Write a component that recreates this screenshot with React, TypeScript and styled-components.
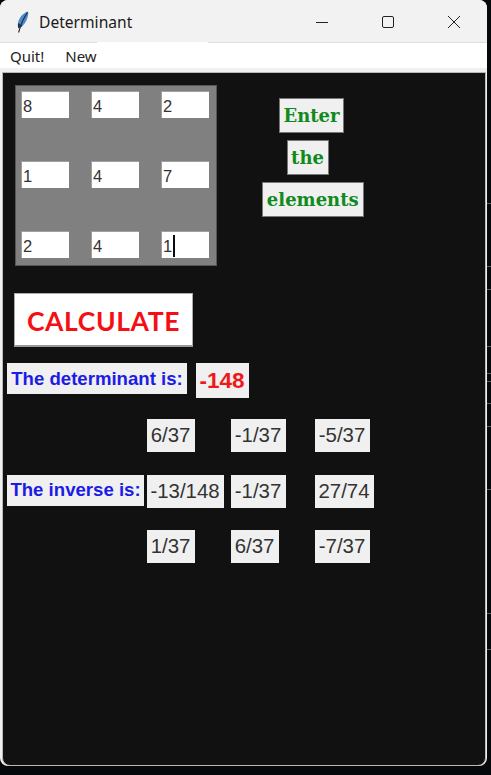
import React from "react";
import styled, { createGlobalStyle } from "styled-components";

const Global = createGlobalStyle`
  html, body { margin: 0; padding: 0; background: #05090c; }
  body { width: 491px; height: 775px; overflow: hidden; }
`;

const Screen = styled.div`
  width: 491px;
  height: 775px;
  display: flex;
  background: #05090c;
`;

const Backdrop = styled.svg`
  width: 4px;
  height: 775px;
  flex: none;
`;

const Window = styled.div`
  width: 487px;
  height: 766px;
  flex: none;
  display: flex;
  flex-direction: column;
  border-radius: 8px;
  overflow: hidden;
  background: #f0f0f0;
`;

const TitleBar = styled.div`
  height: 43px;
  box-sizing: border-box;
  flex: none;
  display: flex;
  align-items: center;
  background: linear-gradient(to right, #dedede 97px, #fff 97px, #fff 208px, #dedede 208px) bottom / 100% 1px no-repeat, #f2f2f2;
  font-family: "Noto Sans", "Open Sans", sans-serif;
  font-size: 15.6px;
  color: #1a1a1a;
`;

const AppIcon = styled.svg`
  width: 16px;
  height: 24px;
  margin-left: 15px;
  margin-right: 8px;
`;

const TitleText = styled.span`
  flex: 1;
`;

const WinButton = styled.div`
  width: 66px;
  height: 42px;
  display: flex;
  align-items: center;
  justify-content: center;
  svg { width: 14px; height: 14px; display: block; }
`;

const MenuBar = styled.div`
  height: 25px;
  flex: none;
  display: flex;
  align-items: center;
  padding-left: 10px;
  gap: 21px;
  background: #fff;
  font-family: "Noto Sans", "Open Sans", sans-serif;
  font-size: 15px;
  color: #222;
`;

const Content = styled.div`
  flex: 1;
  margin: 4px 1px 0 2px;
  background: #111;
  border: 1px solid #b9b9b9;
  border-radius: 0 0 8px 8px;
  padding: 12px 0 0 4px;
  display: flex;
  flex-direction: column;
`;

const TopRow = styled.div`
  display: flex;
  align-items: flex-start;
`;

const Matrix = styled.div`
  margin-left: 8px;
  width: 202px;
  height: 181px;
  box-sizing: border-box;
  padding: 5px 7px 7px 5px;
  background: #808080;
  border: 1px solid #555;
  display: grid;
  grid-template-columns: repeat(3, 48px);
  grid-template-rows: repeat(3, 27px);
  justify-content: space-between;
  align-content: space-between;
`;

const Cell = styled.div`
  background: #fff;
  border-top: 1px solid #a0a0a0;
  border-left: 1px solid #a0a0a0;
  box-sizing: border-box;
  padding: 1px 0 0 1px;
  font-family: "Liberation Sans", Arial, sans-serif;
  font-size: 16.5px;
  line-height: 24px;
  color: #333;
  display: flex;
  align-items: center;
`;

const Caret = styled.span`
  width: 2.5px;
  height: 22px;
  margin-left: 0.5px;
  background: #0a0a14;
`;

const Instructions = styled.div`
  margin-left: 45px;
  margin-top: 13px;
  width: 104px;
  display: flex;
  flex-direction: column;
  gap: 7px;
  align-items: flex-start;
`;

const Word = styled.div<{ $offset: number; $width: number }>`
  margin-left: ${(p) => p.$offset}px;
  width: ${(p) => p.$width}px;
  height: 35px;
  box-sizing: border-box;
  display: flex;
  align-items: center;
  justify-content: center;
  background: #f0f0f0;
  border: 1px solid #777;
  font-family: "DejaVu Serif", "Liberation Serif", serif;
  font-weight: 700;
  font-size: 18px;
  color: #118a1d;
`;

const CalculateButton = styled.button`
  margin: 27px 0 0 7px;
  width: 179px;
  height: 54px;
  box-sizing: border-box;
  padding: 2px 0 0;
  background: #fff;
  border: 1px solid #aaa;
  border-bottom: 2px solid #999;
  font-family: "Lato", "Liberation Sans", sans-serif;
  font-weight: 700;
  font-size: 26.5px;
  letter-spacing: 0.6px;
  color: #f50f14;
`;

const DeterminantRow = styled.div`
  margin-top: 16px;
  display: flex;
  align-items: flex-start;
  gap: 8.5px;
`;

const Label = styled.div<{ $width: number }>`
  width: ${(p) => p.$width}px;
  box-sizing: border-box;
  height: 31px;
  display: flex;
  align-items: center;
  justify-content: center;
  background: #f0f0f0;
  font-family: "Liberation Sans", Arial, sans-serif;
  font-weight: 700;
  font-size: 18.6px;
  white-space: nowrap;
  color: #1c1ce6;
`;

const DeterminantValue = styled.div`
  width: 53px;
  height: 35px;
  display: flex;
  align-items: center;
  justify-content: center;
  background: #f0f0f0;
  font-family: "Liberation Sans", Arial, sans-serif;
  font-weight: 700;
  font-size: 22.5px;
  color: #f01818;
`;

const InverseGrid = styled.div`
  margin-top: 21px;
  display: grid;
  grid-template-columns: 139.5px 84px 84px auto;
  grid-template-rows: repeat(3, 33px);
  row-gap: 22.5px;
  justify-content: start;
  align-items: start;
`;

const Value = styled.div<{ $col: number; $width: number }>`
  grid-column: ${(p) => p.$col};
  width: ${(p) => p.$width}px;
  height: 33px;
  display: flex;
  align-items: center;
  justify-content: center;
  background: #f0f0f0;
  font-family: "Liberation Sans", Arial, sans-serif;
  font-size: 20.4px;
  color: #333;
`;

const InverseLabel = styled(Label)`
  grid-column: 1;
`;

const ticks = [203, 266, 289, 346, 373, 381, 403, 426, 489, 613, 649];

const inverse: [string, string, string][] = [
  ["6/37", "-1/37", "-5/37"],
  ["-13/148", "-1/37", "27/74"],
  ["1/37", "6/37", "-7/37"],
];

const widths = [
  [48, 55, 55],
  [77, 55, 59],
  [48, 48, 55],
];

const Feather = () => (
  <AppIcon viewBox="0 0 16 24">
    <path d="M13 1.5C8.5 2.5 4 7.5 3 13c-.4 2.4-.2 4 .4 5.2C7 17.5 10.3 13.5 12 9c1-2.6 1.6-5.3 1-7.5z" fill="#4c8ac9" />
    <path d="M12.6 2.5C9 7 6.5 12 3.6 22.5" stroke="#1d2733" strokeWidth="1.1" fill="none" />
    <path d="M3.2 13c-.4 2.2-.3 4 .3 5.2 1.6-.3 3-1.2 4-2.4z" fill="#22344a" />
  </AppIcon>
);

export default function App() {
  return (
    <Screen>
      <Global />
      <Window>
        <TitleBar>
          <Feather />
          <TitleText>Determinant</TitleText>
          <WinButton>
            <svg viewBox="0 0 14 14"><path d="M1 7.5h12" stroke="#222" strokeWidth="1" /></svg>
          </WinButton>
          <WinButton>
            <svg viewBox="0 0 14 14"><rect x="1.5" y="1.5" width="11" height="11" rx="1.5" fill="none" stroke="#222" strokeWidth="1" /></svg>
          </WinButton>
          <WinButton>
            <svg viewBox="0 0 14 14"><path d="M1 1l12 12M13 1L1 13" stroke="#222" strokeWidth="1" /></svg>
          </WinButton>
        </TitleBar>
        <MenuBar>
          <span>Quit!</span>
          <span>New</span>
        </MenuBar>
        <Content>
          <TopRow>
            <Matrix>
              <Cell>8</Cell><Cell>4</Cell><Cell>2</Cell>
              <Cell>1</Cell><Cell>4</Cell><Cell>7</Cell>
              <Cell>2</Cell><Cell>4</Cell><Cell>1<Caret /></Cell>
            </Matrix>
            <Instructions>
              <Word $offset={17} $width={65}>Enter</Word>
              <Word $offset={24.5} $width={42}>the</Word>
              <Word $offset={0} $width={101.5}>elements</Word>
            </Instructions>
          </TopRow>
          <CalculateButton>CALCULATE</CalculateButton>
          <DeterminantRow>
            <Label $width={180}>The determinant is:</Label>
            <DeterminantValue>-148</DeterminantValue>
          </DeterminantRow>
          <InverseGrid>
            {inverse.map((row, r) => (
              <React.Fragment key={r}>
                {r === 1 && <InverseLabel $width={137}>The inverse is:</InverseLabel>}
                {row.map((v, c) => (
                  <Value key={c} $col={c + 2} $width={widths[r][c]}>{v}</Value>
                ))}
              </React.Fragment>
            ))}
          </InverseGrid>
        </Content>
      </Window>
      <Backdrop viewBox="0 0 4 775">
        {ticks.map((y) => (
          <rect key={y} x="0" y={y} width="4" height="1" fill="#5c5f62" />
        ))}
      </Backdrop>
    </Screen>
  );
}
